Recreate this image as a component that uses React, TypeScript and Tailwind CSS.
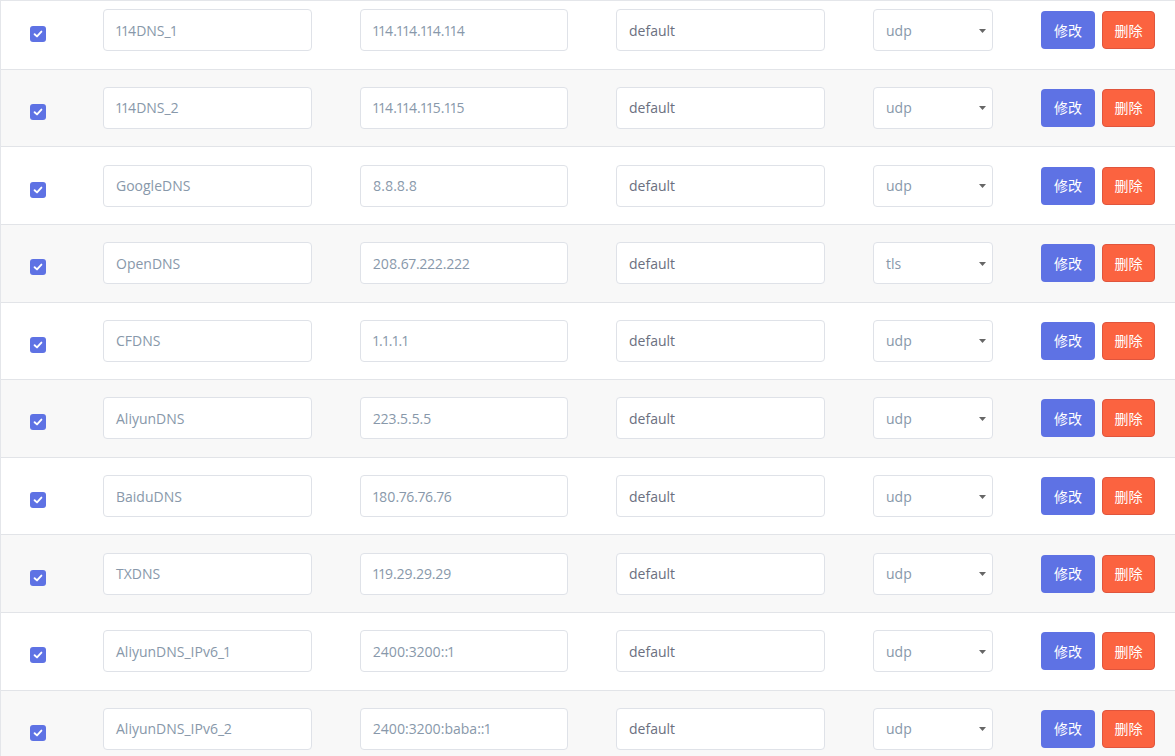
import React from "react";

const rows = [
  { name: "114DNS_1", ip: "114.114.114.114", proto: "udp" },
  { name: "114DNS_2", ip: "114.114.115.115", proto: "udp" },
  { name: "GoogleDNS", ip: "8.8.8.8", proto: "udp" },
  { name: "OpenDNS", ip: "208.67.222.222", proto: "tls" },
  { name: "CFDNS", ip: "1.1.1.1", proto: "udp" },
  { name: "AliyunDNS", ip: "223.5.5.5", proto: "udp" },
  { name: "BaiduDNS", ip: "180.76.76.76", proto: "udp" },
  { name: "TXDNS", ip: "119.29.29.29", proto: "udp" },
  { name: "AliyunDNS_IPv6_1", ip: "2400:3200::1", proto: "udp" },
  { name: "AliyunDNS_IPv6_2", ip: "2400:3200:baba::1", proto: "udp" },
];

function Checkbox() {
  return (
    <div className="w-4 h-4 rounded-[3px] bg-[#5e72e4] flex items-center justify-center mt-2">
      <svg width="10" height="10" viewBox="0 0 10 10">
        <path d="M1.6 5.2 L4 7.4 L8.4 2.6" stroke="white" strokeWidth="1.9" fill="none" strokeLinecap="round" strokeLinejoin="round" />
      </svg>
    </div>
  );
}

function Field({ value, w, dark }: { value: string; w: string; dark?: boolean }) {
  return (
    <div className={`${w} h-[42px] shrink-0 border border-[#dfe2e8] rounded-[4px] bg-white flex items-center px-[12px] text-[14px] proportional-nums ${dark ? "text-[#6b6f80]" : "text-[#8898aa]"}`}>
      {value}
    </div>
  );
}

export default function App() {
  return (
    <div className="w-[1175px] h-[756px] overflow-hidden bg-white border-t border-l border-[#e4e6ea]" style={{ fontFamily: '"Open Sans", "Noto Sans CJK SC", sans-serif' }}>
      <div className="mt-[-10px]">
        {rows.map((r, i) => (
          <div
            key={i}
            className={`h-[77.625px] border-t border-[#e2e4e8] flex items-center pl-[29px] ${i % 2 === 1 ? "bg-[#f8f8f8]" : "bg-white"}`}
          >
            <div className="w-4 mr-[57px] shrink-0">
              <Checkbox />
            </div>
            <Field value={r.name} w="w-[209px]" />
            <div className="w-[48px] shrink-0" />
            <Field value={r.ip} w="w-[208px]" />
            <div className="w-[48px] shrink-0" />
            <Field value="default" w="w-[209px]" dark />
            <div className="w-[48px] shrink-0" />
            <div className="w-[120px] h-[42px] shrink-0 border border-[#dfe2e8] rounded-[4px] bg-white flex items-center justify-between pl-[12px] pr-[6px] text-[14px] text-[#8898aa]">
              <span>{r.proto}</span>
              <svg width="7" height="4" viewBox="0 0 7 4" className="mt-[1px]"><path d="M0 0 L7 0 L3.5 4 Z" fill="#666" /></svg>
            </div>
            <div className="w-[48px] shrink-0" />
            <div className="flex gap-[7px]">
              <button className="w-[54px] h-[38px] rounded-[4px] bg-[#5e72e4] text-white text-[14px] flex items-center justify-center">修改</button>
              <button className="w-[53px] h-[38px] rounded-[4px] bg-[#fb6340] border border-[#e0553d] text-white text-[14px] flex items-center justify-center">删除</button>
            </div>
          </div>
        ))}
      </div>
    </div>
  );
}
